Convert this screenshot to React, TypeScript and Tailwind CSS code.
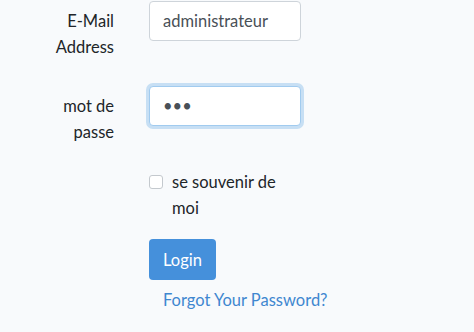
import React from "react";

export default function App() {
  return (
    <div
      className="w-[474px] h-[332px] overflow-hidden bg-[#f8fafc] text-[#212529] text-[16.5px] leading-[26px]"
      style={{ fontFamily: "Lato, 'Noto Sans', sans-serif" }}
    >
      <div className="grid grid-cols-[114px_152px] gap-x-[35px] pt-[1px]">
        <label className="ml-auto w-[72px] text-right pt-[7px]">E-Mail Address</label>
        <input
          className="h-[40px] w-[152px] rounded-[4px] border border-[#ced4da] bg-white px-[13px] text-[#495057] outline-none"
          defaultValue="administrateur"
          readOnly
        />

        <label className="ml-auto w-[72px] text-right pt-[7px] mt-[26px]">mot de passe</label>
        <input
          type="password"
          className="mt-[26px] h-[40px] w-[152px] rounded-[4px] border border-[#a1cbef] bg-white px-[13px] text-[#495057] outline-none shadow-[0_0_0_3px_rgba(52,144,220,0.25)]"
          defaultValue="abc"
          readOnly
        />

        <div />
        <div className="mt-[24px] flex items-start">
          <span className="mt-[6px] h-[14px] w-[14px] shrink-0 rounded-[3px] border border-[#c4c9ce] bg-white" />
          <span className="ml-[9px]">se souvenir de moi</span>
        </div>

        <div />
        <div className="mt-[18px]">
          <button className="h-[41px] rounded-[4px] bg-[#4590db] px-[14px] text-white">
            Login
          </button>
        </div>

        <div />
        <div className="mt-[7px] pl-[14px] whitespace-nowrap text-[#3f87d0]">Forgot Your Password?</div>
      </div>
    </div>
  );
}
